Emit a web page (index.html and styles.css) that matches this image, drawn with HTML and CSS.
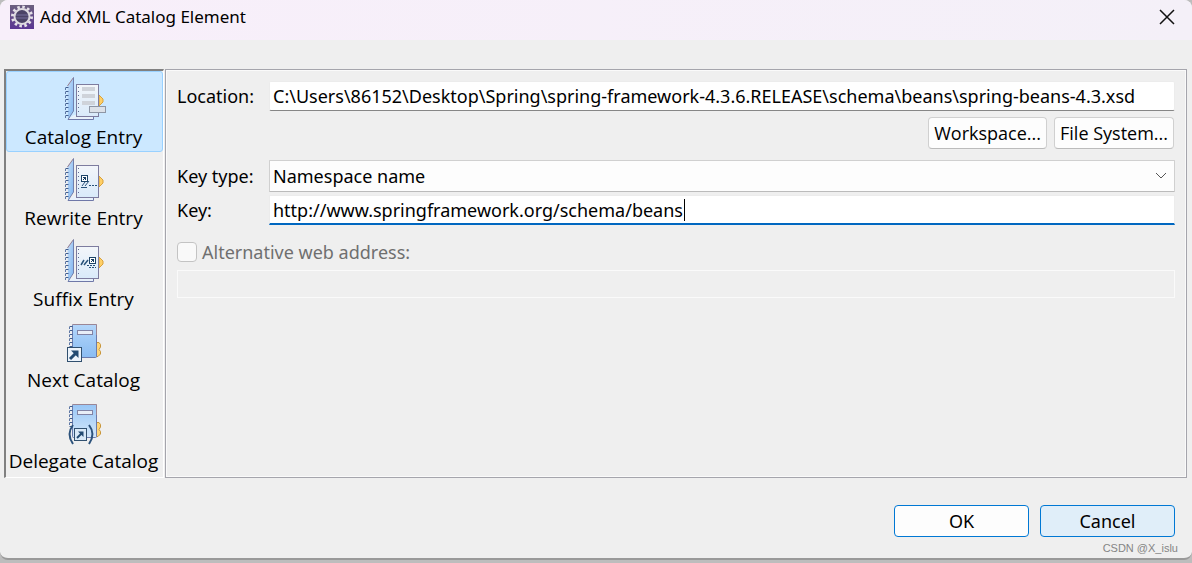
FILE: index.html
```html
<!DOCTYPE html>
<html lang="en">

<head>
    <meta charset="UTF-8">
    <meta name="viewport" content="width=device-width, initial-scale=1.0">
    <title>Add XML Catalog Element</title>
    <link rel="stylesheet" href="styles.css">
</head>

<body>
    <!-- Shared icon parts -->
    <svg class="defs" width="0" height="0" aria-hidden="true">
        <defs>
            <linearGradient id="sheet" x1="0" y1="0" x2="1" y2="1">
                <stop offset="0" stop-color="#c4ddf8" />
                <stop offset="1" stop-color="#7db4f0" />
            </linearGradient>
            <linearGradient id="page" x1="0" y1="0" x2="0" y2="1">
                <stop offset="0" stop-color="#f3f6fa" />
                <stop offset="1" stop-color="#d9eafa" />
            </linearGradient>
            <linearGradient id="cover" x1="0" y1="0" x2="0" y2="1">
                <stop offset="0" stop-color="#b3d6fa" />
                <stop offset="1" stop-color="#8abcf2" />
            </linearGradient>
            <linearGradient id="cover-light" x1="0" y1="0" x2="0" y2="1">
                <stop offset="0" stop-color="#98c6f6" />
                <stop offset="1" stop-color="#d3e7fa" />
            </linearGradient>
            <linearGradient id="purple" x1="0" y1="0" x2="0" y2="1">
                <stop offset="0" stop-color="#6c607e" />
                <stop offset="1" stop-color="#5b3694" />
            </linearGradient>
            <g id="open-book">
                <path d="M8 45L14 41H34V45Z" fill="#e8f1fb" />
                <path d="M8 45.5H33.5V43" fill="none" stroke="#6f78a8" />
                <path d="M7.5 11L13.5 3.5V37L8 45Z" fill="url(#sheet)" />
                <path d="M7.5 12L13.5 3.5" fill="none" stroke="#9b7f8e" />
                <path d="M13.5 3.5V37L8 45.5" fill="none" stroke="#7180ae" />
                <path d="M39 21L43 25V28L39 32Z" fill="#ffcf66" stroke="#d8a13c" />
                <rect x="16.5" y="10.5" width="22" height="32" fill="url(#page)" stroke="#7d7c9f" />
                <path d="M18.5 13V41" stroke="#626b94" stroke-dasharray="1 3" />
                <path d="M7 13V44" stroke="#3f5c8e" stroke-width="3" stroke-dasharray="1 3" />
                <path d="M5.5 14V44" stroke="#5f78a6" stroke-dasharray="2 2" />
            </g>
            <g id="book-edge">
                <path d="M36 25.5H39L40.5 27.5V30L39 32.5L40.5 34.5V37L38 39.5H36Z" fill="#ffd579" stroke="#c8963c" />
            </g>
            <g id="book-trim">
                <path d="M12.5 7.5H36.5V18" fill="none" stroke="#9b8796" />
                <rect x="17.5" y="13.5" width="15" height="4" fill="#e8eef7" stroke="#8183a5" />
                <path d="M11 9V30" stroke="#3f5c8e" stroke-width="3" stroke-dasharray="1 3" />
                <path d="M9.5 10V30" stroke="#5f78a6" stroke-dasharray="2 2" />
            </g>
            <g id="link">
                <rect x="0.5" y="0.5" width="6" height="6" fill="#fff" stroke="#1c4468" />
                <path d="M2 5L5 2M2 2.5H4.5V5" fill="none" stroke="#123a60" />
            </g>
        </defs>
    </svg>

    <div class="dialog">
        <header class="title-bar">
            <svg class="app-icon" width="24" height="24" viewBox="0 0 24 24" aria-hidden="true">
                <rect width="24" height="24" fill="url(#purple)" />
                <circle cx="12" cy="11.5" r="9.5" fill="none" stroke="#e5e1e8" stroke-width="3" stroke-dasharray="2.5 2.47" />
                <circle cx="12" cy="11.5" r="7.5" fill="#4b4366" stroke="#dedae0" stroke-width="2" />
                <path d="M6 10H18M6 13H18" stroke="#776f9b" />
            </svg>
            <h1>Add XML Catalog Element</h1>
            <button type="button" class="close" aria-label="Close">
                <svg width="16" height="16" viewBox="0 0 16 16">
                    <path d="M1 1L15 15M15 1L1 15" stroke="#111" stroke-width="1.5" />
                </svg>
            </button>
        </header>

        <main class="content">
            <nav class="sidebar">
                <button type="button" class="entry selected">
                    <svg width="48" height="48" viewBox="0 0 48 48">
                        <use href="#open-book" />
                        <path d="M22 15H35M22 22H35M22 29H35" stroke="#cfd3da" stroke-width="4" />
                        <rect x="29.5" y="32.5" width="16" height="6" fill="#dce1e8" stroke="#8e96a5" />
                    </svg>
                    <span>Catalog Entry</span>
                </button>
                <button type="button" class="entry">
                    <svg width="48" height="48" viewBox="0 0 48 48">
                        <use href="#open-book" />
                        <use href="#link" x="21" y="20" />
                        <path d="M22 31L25 27M25 31L29 26M21 32.5H27" stroke="#28527a" />
                        <path d="M29 30.5H37" stroke="#28527a" stroke-dasharray="2 1" />
                    </svg>
                    <span>Rewrite Entry</span>
                </button>
                <button type="button" class="entry">
                    <svg width="48" height="48" viewBox="0 0 48 48">
                        <use href="#open-book" />
                        <use href="#link" x="29" y="21" />
                        <path d="M21 29L24 24M24 29L28 24" stroke="#28527a" stroke-width="1.5" />
                        <path d="M27 29.5H36M29 31.5H36" stroke="#28527a" stroke-dasharray="2 1" />
                    </svg>
                    <span>Suffix Entry</span>
                </button>
                <button type="button" class="entry">
                    <svg width="48" height="48" viewBox="0 0 48 48">
                        <use href="#book-edge" />
                        <rect x="12.5" y="7.5" width="24" height="33" rx="1" fill="url(#cover)" stroke="#6b7bab" />
                        <use href="#book-trim" />
                        <rect x="7.5" y="30.5" width="14" height="14" fill="#edf4fb" stroke="#31506f" />
                        <path d="M10 42L17 35" stroke="#234b72" stroke-width="3" />
                        <path d="M11 33.5H18.5V41Z" fill="#234b72" />
                    </svg>
                    <span>Next Catalog</span>
                </button>
                <button type="button" class="entry">
                    <svg width="48" height="48" viewBox="0 0 48 48">
                        <use href="#book-edge" y="-1" />
                        <rect x="12.5" y="6.5" width="24" height="33" rx="1" fill="url(#cover-light)" stroke="#6b7bab" />
                        <use href="#book-trim" y="-1" />
                        <rect x="14.5" y="30.5" width="12" height="12" fill="#d9e9f8" stroke="#31506f" />
                        <path d="M17 40L22 35" stroke="#234b72" stroke-width="2" />
                        <path d="M18 33.5H23.5V39Z" fill="#234b72" />
                        <path d="M13 27Q6 36 13 46M29 27Q36 36 29 46" fill="none" stroke="#2c527b" stroke-width="2" />
                    </svg>
                    <span>Delegate Catalog</span>
                </button>
            </nav>

            <form class="panel">
                <div class="field">
                    <label for="location">Location:</label>
                    <input type="text" id="location" class="text-box" value="C:\Users\86152\Desktop\Spring\spring-framework-4.3.6.RELEASE\schema\beans\spring-beans-4.3.xsd">
                </div>
                <div class="browse">
                    <button type="button">Workspace...</button>
                    <button type="button">File System...</button>
                </div>
                <div class="field">
                    <label for="key-type">Key type:</label>
                    <div class="select-wrap">
                        <select id="key-type">
                            <option>Namespace name</option>
                        </select>
                        <svg class="chevron" width="12" height="8" viewBox="0 0 12 8" aria-hidden="true">
                            <path d="M1 1L6 6L11 1" fill="none" stroke="#555" />
                        </svg>
                    </div>
                </div>
                <div class="field key-field">
                    <label for="key">Key:</label>
                    <div class="key-wrap">
                        <input type="text" id="key" class="text-box active" value="http://www.springframework.org/schema/beans">
                        <span class="caret"></span>
                    </div>
                </div>
                <div class="alternative">
                    <input type="checkbox" id="alternative" disabled>
                    <label for="alternative">Alternative web address:</label>
                </div>
                <input type="text" class="alternative-box" aria-label="Alternative web address" disabled>
            </form>
        </main>

        <footer class="actions">
            <button type="button">OK</button>
            <button type="button" class="hovered">Cancel</button>
        </footer>
        <span class="credit">CSDN @X_islu</span>
    </div>
</body>

</html>
```
FILE: styles.css
```css
* {
    box-sizing: border-box;
}

body {
    display: flex;
    min-height: 100vh;
    margin: 0;
    padding-bottom: 3px;
    background-color: #bdbdbd;
    color: #000;
    font-family: "Noto Sans", "Open Sans", sans-serif;
    font-size: 18px;
    line-height: 24px;
}

button,
input,
select {
    margin: 0;
    color: inherit;
    font: inherit;
}

.defs {
    position: absolute;
}

.dialog {
    position: relative;
    display: flex;
    flex: 1;
    flex-direction: column;
    min-width: 0;
    overflow: hidden;
    background-color: #efefef;
    border-bottom: 2px solid #999;
    border-radius: 8px;
}

.title-bar {
    display: flex;
    align-items: center;
    height: 40px;
    padding: 0 17px 6px 10px;
    background: linear-gradient(90deg, #f8effa, #f4f0f8);
}

h1 {
    flex: 1;
    margin: 0 0 0 6px;
    font-size: 17px;
    font-weight: normal;
}

.close {
    display: flex;
    padding: 0;
    background: none;
    border: none;
}

.content {
    display: flex;
    flex: 1;
    gap: 1px;
    padding: 29px 5px 0 4px;
}

.sidebar {
    width: 160px;
    border: 1px solid #fff;
    border-top: 2px solid #808080;
    border-left: 2px solid #808080;
    font-family: "Open Sans", "Noto Sans", sans-serif;
    font-size: 19px;
}

.entry {
    display: flex;
    flex-direction: column;
    align-items: center;
    gap: 3px;
    width: 100%;
    height: 81px;
    padding: 2px 2px 0 0;
    background: none;
    border: 1px solid transparent;
    border-radius: 3px;
    white-space: nowrap;
}

.entry svg {
    flex-shrink: 0;
}

.entry.selected {
    background-color: #cce8ff;
    border-color: #99d1ff;
}

.panel {
    flex: 1;
    min-width: 0;
    padding: 11px 11px 0 11px;
    border: 1px solid #a5a5ac;
    box-shadow: inset 0 0 0 1px #fafafa;
}

.field {
    display: grid;
    grid-template-columns: 92px minmax(0, 1fr);
    align-items: center;
}

.text-box {
    width: 100%;
    height: 30px;
    padding: 0 3px;
    background-color: #fff;
    border: 1px solid #ececec;
    border-bottom-color: #868686;
    border-radius: 2px;
    outline: none;
}

.text-box.active {
    display: block;
    border-bottom: 2px solid #0067c0;
    border-radius: 0;
}

.browse {
    display: flex;
    justify-content: flex-end;
    gap: 7px;
    margin: 6px 1px 11px 0;
}

.browse button {
    height: 32px;
    min-width: 117px;
    padding: 0 5px;
    background-color: #fdfdfd;
    border: 1px solid #d0d0d0;
    border-bottom-color: #bbb;
    border-radius: 4px;
    font-family: "Open Sans", "Noto Sans", sans-serif;
}

.select-wrap,
.key-wrap {
    position: relative;
}

select {
    display: block;
    width: 100%;
    height: 32px;
    padding: 0 3px;
    appearance: none;
    background-color: #fdfdfd;
    border: 1px solid #d0d0d0;
    border-bottom-color: #bbb;
    border-radius: 1px;
}

.chevron {
    position: absolute;
    top: 12px;
    right: 8px;
    pointer-events: none;
}

.key-field {
    margin-top: 3px;
}

.caret {
    position: absolute;
    top: 4px;
    left: 415px;
    width: 1px;
    height: 22px;
    background-color: #000;
}

.alternative {
    display: flex;
    align-items: center;
    gap: 5px;
    margin: 15px 0 6px;
    color: #6f6f6f;
}

.alternative input {
    width: 20px;
    height: 20px;
    appearance: none;
    background-color: #f9f9f9;
    border: 1px solid #c3c3c3;
    border-radius: 4px;
}

.alternative-box {
    display: block;
    width: 100%;
    height: 28px;
    background-color: #efefef;
    border: 1px solid #fafafa;
}

.actions {
    display: flex;
    justify-content: flex-end;
    gap: 11px;
    padding: 27px 17px 21px;
}

.actions button {
    width: 135px;
    height: 32px;
    padding: 0;
    background-color: #fdfdfd;
    border: 1px solid #0078d4;
    border-radius: 4px;
}

.actions .hovered {
    background-color: #e0eef9;
}

.credit {
    position: absolute;
    right: 14px;
    bottom: 2px;
    color: #858585;
    font-family: "Liberation Sans", sans-serif;
    font-size: 11px;
    line-height: 16px;
}
```
